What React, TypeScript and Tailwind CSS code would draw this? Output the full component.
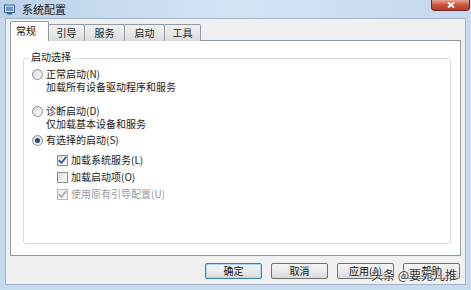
import React from 'react';

/* ─── Data ───────────────────────────────────────────────────────────────── */

const TABS = ['常规', '引导', '服务', '启动', '工具'];
const TAB_W = [39, 37, 41, 41, 37];

const FONT = "font-['Noto_Sans_CJK_SC','Noto_Sans',sans-serif]";

/* ─── Controls ───────────────────────────────────────────────────────────── */

function Radio({ checked }: { checked?: boolean }) {
  return (
    <span className="w-[11px] h-[11px] rounded-full border border-[#8e8f8f] bg-gradient-to-br from-[#dcdcdc] to-[#fbfbfb] flex items-center justify-center shrink-0">
      {checked && <span className="w-[5px] h-[5px] rounded-full bg-[#1d4d8a]" />}
    </span>
  );
}

function Check({ checked, disabled }: { checked?: boolean; disabled?: boolean }) {
  return (
    <span
      className={`w-[11px] h-[11px] border flex items-center justify-center shrink-0 ${
        disabled ? 'border-[#bcbcbc] bg-[#f4f4f4]' : 'border-[#8e8f8f] bg-gradient-to-br from-[#dedede] to-[#fbfbfb]'
      }`}
    >
      {checked && (
        <svg width="9" height="9" viewBox="0 0 9 9" fill="none">
          <path
            d="M1.2 4.6 L3.4 7 L7.8 1.4"
            stroke={disabled ? '#a8a8a8' : '#264d8e'}
            strokeWidth="1.6"
            strokeLinecap="round"
            strokeLinejoin="round"
          />
        </svg>
      )}
    </span>
  );
}

function Button({ label, primary }: { label: string; primary?: boolean }) {
  return (
    <div
      className={`w-[57px] h-[16px] rounded-[2px] border flex items-center justify-center text-[10px] leading-none text-[#111] bg-gradient-to-b from-[#f4f4f4] via-[#ebebeb] to-[#d9d9d9] ${
        primary ? 'border-[#3c7fb1] shadow-[inset_0_0_0_1px_#a9dbf6]' : 'border-[#707070]'
      }`}
    >
      {label}
    </div>
  );
}

/* ─── App ────────────────────────────────────────────────────────────────── */

export default function App() {
  return (
    <div className={`w-[471px] h-[290px] overflow-hidden flex flex-col bg-[#c6daf0] ${FONT}`}>
      {/* Title bar */}
      <div className="relative h-[18px] shrink-0 flex items-center px-[4px] gap-[7px] bg-gradient-to-r from-[#bcd2ea] via-[#d4e4f5] to-[#c3d8ef]">
        <svg width="11" height="11" viewBox="0 0 11 11">
          <rect x="0.5" y="1" width="10" height="7.5" fill="#dfe9f5" stroke="#3b5f8f" />
          <rect x="2" y="2.5" width="7" height="4.5" fill="#6b95c8" />
          <rect x="3" y="9" width="5" height="1.5" fill="#3b5f8f" />
        </svg>
        <span className="text-[11px] leading-none text-[#1a1a1a]">系统配置</span>
        <div className="absolute right-[1px] top-0 w-[39px] h-[11px] rounded-b-[4px] border border-t-0 border-[#6b2b22] bg-gradient-to-b from-[#e8a493] via-[#c8553c] to-[#b73b22] flex items-center justify-center">
          <svg width="8" height="6" viewBox="0 0 8 6">
            <path d="M1 0.5 L7 5.5 M7 0.5 L1 5.5" stroke="#fff" strokeWidth="1.8" />
          </svg>
        </div>
      </div>

      {/* Client area */}
      <div className="flex-1 mx-[5px] mb-[5px] bg-[#f0f0f0] border border-[#a3b3c6] flex flex-col">
        <div className="pt-[2px] px-[4px]">
          {/* Tabs */}
          <div className="flex items-end h-[20px] pl-[2px] relative z-10">
            {TABS.map((t, i) =>
              i === 0 ? (
                <div
                  key={t}
                  className="h-[20px] w-[39px] -ml-[2px] shrink-0 bg-white border border-b-0 border-[#8e9aa6] rounded-t-[2px] flex items-start pl-[5px] pt-[2px] text-[10px] leading-[14px] text-[#111] whitespace-nowrap"
                >
                  {t}
                </div>
              ) : (
                <div
                  key={t}
                  className="h-[17px] -ml-[1px] shrink-0 bg-gradient-to-b from-[#f2f2f2] to-[#dcdcdc] border border-b-0 border-[#8e9aa6] rounded-t-[2px] flex items-center justify-center text-[10px] leading-none text-[#222] whitespace-nowrap"
                  style={{ width: TAB_W[i] }}
                >
                  {t}
                </div>
              ),
            )}
          </div>

          {/* Panel */}
          <div className="-mt-[1px] h-[216px] bg-white border border-[#8e9aa6] pl-[12px] pr-[9px] pt-[17px] pb-[11px] flex">
            <div className="relative flex-1 border border-[#d5dfe5] rounded-[2px] pl-[8px] pt-[9px] flex flex-col text-[10px] leading-[12px] text-[#1a1a1a]">
              <span className="absolute -top-[7px] left-[5px] bg-white px-[2px] text-[10px] leading-none">启动选择</span>

              <div className="flex items-center gap-[3px] h-[12px]">
                <Radio />
                <span>正常启动(N)</span>
              </div>
              <span className="ml-[14px] h-[13px] leading-[13px]">加载所有设备驱动程序和服务</span>

              <div className="flex items-center gap-[3px] h-[12px] mt-[12px]">
                <Radio />
                <span>诊断启动(D)</span>
              </div>
              <span className="ml-[14px] h-[13px] leading-[13px]">仅加载基本设备和服务</span>

              <div className="flex items-center gap-[3px] h-[12px] mt-[4px]">
                <Radio checked />
                <span>有选择的启动(S)</span>
              </div>

              <div className="ml-[25px] mt-[8px] flex flex-col gap-[5px]">
                <div className="flex items-center gap-[3px] h-[12px]">
                  <Check checked />
                  <span>加载系统服务(L)</span>
                </div>
                <div className="flex items-center gap-[3px] h-[12px]">
                  <Check />
                  <span>加载启动项(O)</span>
                </div>
                <div className="flex items-center gap-[3px] h-[12px] text-[#9a9a9a]">
                  <Check checked disabled />
                  <span>使用原有引导配置(U)</span>
                </div>
              </div>
            </div>
          </div>
        </div>

        {/* Buttons */}
        <div className="relative flex justify-end gap-[9px] pr-[5px] mt-[7px]">
          <Button label="确定" primary />
          <Button label="取消" />
          <Button label="应用(A)" />
          <Button label="帮助" />
          <span className="absolute right-[8px] top-[6px] text-[12px] leading-none text-[#333] [text-shadow:0_0_2px_#fff,0_0_2px_#fff]">
            头条 @要宛儿推
          </span>
        </div>
      </div>
    </div>
  );
}
